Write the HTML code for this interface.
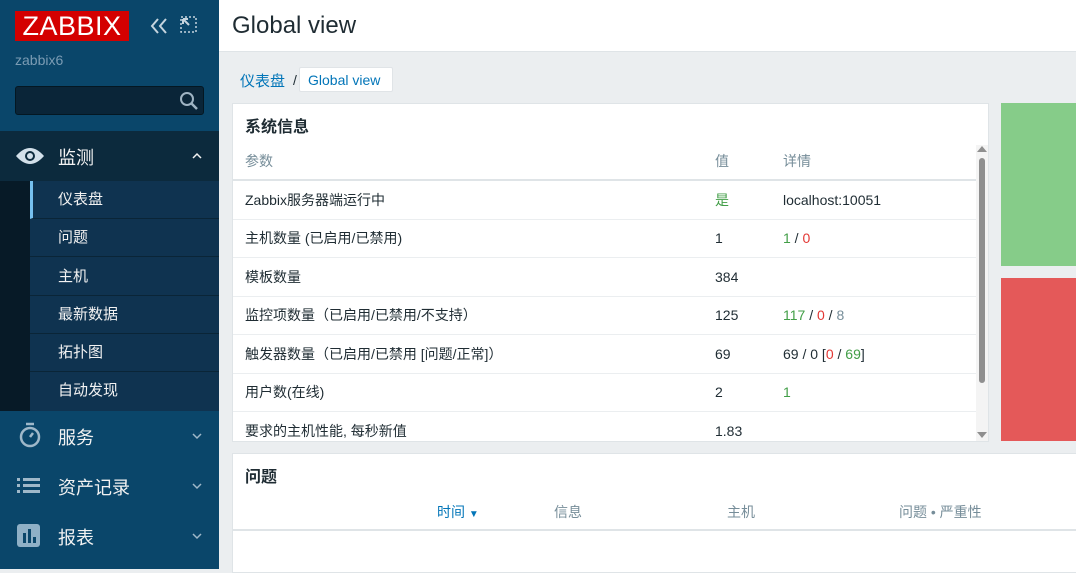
<!DOCTYPE html>
<html><head><meta charset="utf-8"><style>
*{box-sizing:border-box;margin:0;padding:0}
body{width:1076px;height:569px;overflow:hidden;font-family:"Liberation Sans","Noto Sans CJK SC",sans-serif;background:#ebeef0;position:relative;font-size:14px;color:#1f2c33}
.side{position:absolute;left:0;top:0;width:219px;height:569px;background:#0a466a}
.logo{position:absolute;left:15px;top:11px;width:114px;height:30px;background:#d40000;color:#fff;font-size:27px;line-height:31px;text-align:center;letter-spacing:0.5px}
.host{position:absolute;left:15px;top:52px;color:#7b9cb4;font-size:14px}
.search{position:absolute;left:15px;top:86px;width:189px;height:29px;background:#0a2538;border:1px solid #041722;border-radius:3px}
.sec{position:absolute;left:0;width:219px;color:#f2f2f2;font-size:18px}
.sub{position:absolute;left:0;top:181px;width:219px;height:230px;background:#0f3350}
.sub .strip{position:absolute;left:0;top:0;width:30px;height:230px;background:#071a27}
.sub div.it{position:absolute;left:30px;width:189px;height:38px;border-bottom:1px solid #0a2537;color:#f2f2f2;font-size:15px;padding-left:28px;line-height:37px}
.main{position:absolute;left:219px;top:0;width:857px;height:52px;background:#fff;border-bottom:1px solid #dfe4e7}
.title{position:absolute;left:232px;top:12px;font-size:24px;color:#1f2c33}
.w{position:absolute;background:#fff;border:1px solid #dfe4e7}
.row{position:absolute;left:233px;width:743px;height:39px;border-bottom:1px solid #ebeef0;font-size:14px;line-height:38px}
.row span{position:absolute}
.g{color:#429e47}.r{color:#e33734}.gr{color:#768d99}
.chev{position:absolute;left:192px;top:21px}
</style></head><body>
<div class="side">
<div class="logo">ZABBIX</div>
<svg style="position:absolute;left:149px;top:17px" width="20" height="18"><path d="M9 2 L3 9 L9 16 M17 2 L11 9 L17 16" stroke="#c5d4de" stroke-width="2" fill="none"/></svg>
<svg style="position:absolute;left:180px;top:16px" width="18" height="18"><rect x="1" y="1" width="15" height="15" stroke="#c5d4de" stroke-width="1.5" stroke-dasharray="2 2" fill="none"/><path d="M3 3 L9 9 M3 3 L3 8 M3 3 L8 3" stroke="#c5d4de" stroke-width="2" fill="none"/></svg>
<div class="host">zabbix6</div>
<div class="search"><svg style="position:absolute;right:4px;top:4px" width="20" height="20"><circle cx="8" cy="8" r="6" stroke="#9fb4c3" stroke-width="2" fill="none"/><line x1="12.5" y1="12.5" x2="18" y2="18" stroke="#9fb4c3" stroke-width="2.5"/></svg></div>
<div class="sec" style="top:131px;height:50px;background:#0c2a3d"><svg style="position:absolute;left:15px;top:15px" width="30" height="20"><path d="M1 10 Q15 -6 29 10 Q15 26 1 10Z" fill="#d3e0ea"/><circle cx="15" cy="10" r="5" fill="#0c2a3d"/><circle cx="15" cy="10" r="3" fill="#d3e0ea"/></svg><span style="position:absolute;left:58px;top:13px">监测</span><svg class="chev" width="10" height="8"><path d="M1 6 L5 2 L9 6" stroke="#f2f2f2" stroke-width="1.5" fill="none"/></svg></div>
<div class="sub"><div class="strip"></div>
<div class="it" style="top:0;border-left:3px solid #76c1f0;padding-left:25px">仪表盘</div>
<div class="it" style="top:38px">问题</div>
<div class="it" style="top:77px">主机</div>
<div class="it" style="top:115px">最新数据</div>
<div class="it" style="top:153px">拓扑图</div>
<div class="it" style="top:191px;border:0">自动发现</div>
</div>
<div class="sec" style="top:411px;height:50px"><svg style="position:absolute;left:18px;top:11px" width="24" height="26"><circle cx="12" cy="15" r="9" stroke="#9fb8c9" stroke-width="2.5" fill="none"/><line x1="8" y1="2" x2="16" y2="2" stroke="#9fb8c9" stroke-width="2.5"/><line x1="12" y1="15" x2="15" y2="11" stroke="#9fb8c9" stroke-width="2.5"/></svg><span style="position:absolute;left:58px;top:13px">服务</span><svg class="chev" width="10" height="8"><path d="M1 2 L5 6 L9 2" stroke="#9fb8c9" stroke-width="1.5" fill="none"/></svg></div>
<div class="sec" style="top:461px;height:50px"><svg style="position:absolute;left:17px;top:15px" width="24" height="18"><g fill="#9fb8c9"><rect x="0" y="2" width="3" height="3"/><rect x="6" y="2" width="17" height="3"/><rect x="0" y="8" width="3" height="3"/><rect x="6" y="8" width="17" height="3"/><rect x="0" y="14" width="3" height="3"/><rect x="6" y="14" width="17" height="3"/></g></svg><span style="position:absolute;left:58px;top:13px">资产记录</span><svg class="chev" width="10" height="8"><path d="M1 2 L5 6 L9 2" stroke="#9fb8c9" stroke-width="1.5" fill="none"/></svg></div>
<div class="sec" style="top:511px;height:50px"><svg style="position:absolute;left:17px;top:13px" width="24" height="24"><rect width="23" height="23" rx="3" fill="#8fb0c6"/><g fill="#0a466a"><rect x="6" y="9" width="3" height="10"/><rect x="11" y="5" width="3" height="14"/><rect x="16" y="13" width="3" height="6"/></g></svg><span style="position:absolute;left:58px;top:13px">报表</span><svg class="chev" width="10" height="8"><path d="M1 2 L5 6 L9 2" stroke="#9fb8c9" stroke-width="1.5" fill="none"/></svg></div>
</div>
<div class="main"></div>
<div class="title">Global view</div>
<div style="position:absolute;left:240px;top:70px;color:#0275b8;font-size:15px">仪表盘</div>
<div style="position:absolute;left:293px;top:72px;font-size:14px">/</div>
<div style="position:absolute;left:299px;top:67px;width:94px;height:25px;background:#fff;border:1px solid #e0e4e7;border-radius:2px;color:#0275b8;font-size:14px;line-height:24px;padding-left:8px">Global view</div>
<div class="w" style="left:232px;top:103px;width:757px;height:339px"></div>
<div style="position:absolute;left:245px;top:113px;font-size:16px;font-weight:bold">系统信息</div>
<div class="row" style="top:142px;border-bottom:2px solid #dfe4e7;color:#768d99"><span style="left:12px;top:0">参数</span><span style="left:482px">值</span><span style="left:550px">详情</span></div>
<div class="row" style="top:181px"><span style="left:12px">Zabbix服务器端运行中</span><span style="left:482px" class="g">是</span><span style="left:550px">localhost:10051</span></div>
<div class="row" style="top:219px"><span style="left:12px">主机数量 (已启用/已禁用)</span><span style="left:482px">1</span><span style="left:550px"><b class="g" style="font-weight:normal">1</b> / <b class="r" style="font-weight:normal">0</b></span></div>
<div class="row" style="top:258px"><span style="left:12px">模板数量</span><span style="left:482px">384</span></div>
<div class="row" style="top:296px"><span style="left:12px">监控项数量（已启用/已禁用/不支持）</span><span style="left:482px">125</span><span style="left:550px"><i class="g" style="font-style:normal">117</i> / <i class="r" style="font-style:normal">0</i> / <i class="gr" style="font-style:normal">8</i></span></div>
<div class="row" style="top:335px"><span style="left:12px">触发器数量（已启用/已禁用 [问题/正常]）</span><span style="left:482px">69</span><span style="left:550px">69 / 0 [<i class="r" style="font-style:normal">0</i> / <i class="g" style="font-style:normal">69</i>]</span></div>
<div class="row" style="top:373px"><span style="left:12px">用户数(在线)</span><span style="left:482px">2</span><span style="left:550px" class="g">1</span></div>
<div class="row" style="top:412px;border:0"><span style="left:12px">要求的主机性能, 每秒新值</span><span style="left:482px">1.83</span></div>
<div style="position:absolute;left:976px;top:145px;width:12px;height:296px;background:#f4f4f4"></div>
<div style="position:absolute;left:977px;top:146px;width:0;height:0;border:5px solid transparent;border-bottom:6px solid #8f8f8f;border-top:0"></div>
<div style="position:absolute;left:979px;top:158px;width:6px;height:225px;background:#8f8f8f;border-radius:3px"></div>
<div style="position:absolute;left:977px;top:432px;border:5px solid transparent;border-top:6px solid #8f8f8f;border-bottom:0"></div>
<div style="position:absolute;left:1001px;top:103px;width:75px;height:163px;background:#86cc89"></div>
<div style="position:absolute;left:1001px;top:278px;width:75px;height:163px;background:#e45959"></div>
<div class="w" style="left:232px;top:453px;width:850px;height:120px"></div>
<div style="position:absolute;left:245px;top:463px;font-size:16px;font-weight:bold">问题</div>
<div style="position:absolute;left:233px;top:529px;width:843px;height:2px;background:#dfe4e7"></div>
<div style="position:absolute;left:437px;top:502px;color:#0275b8;font-size:14px">时间 <span style="font-size:10px">&#9660;</span></div>
<div style="position:absolute;left:554px;top:502px;color:#768d99">信息</div>
<div style="position:absolute;left:727px;top:502px;color:#768d99">主机</div>
<div style="position:absolute;left:899px;top:502px;color:#768d99">问题 • 严重性</div>
</body></html>
